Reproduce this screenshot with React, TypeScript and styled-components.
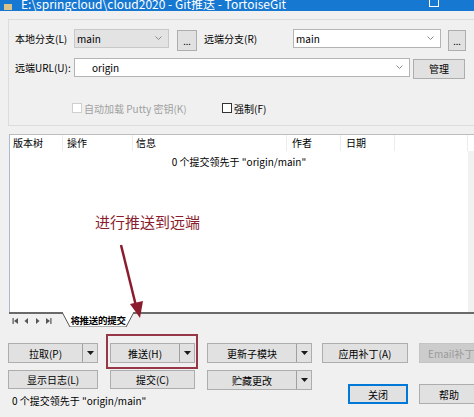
import React from "react";
import styled, { createGlobalStyle } from "styled-components";

const GlobalStyle = createGlobalStyle`
  html, body {
    margin: 0;
    padding: 0;
    background: #f0f0f0;
    overflow: hidden;
  }
  body {
    font-family: "Noto Sans CJK SC", "Noto Sans", sans-serif;
    font-size: 10px;
    color: #000;
  }
`;

const Window = styled.div`
  width: 474px;
  height: 417px;
  overflow: hidden;
  display: flex;
  flex-direction: column;
  background: #f0f0f0;
`;

const TitleBar = styled.div`
  height: 11px;
  background: #1778d2;
  display: flex;
  align-items: flex-end;
  overflow: hidden;
  position: relative;
`;

const TitleIcon = styled.div`
  width: 8px;
  height: 6px;
  margin: 0 9px 1px 4px;
  background: #d8c48a;
`;

const TitleText = styled.div`
  color: #fff;
  font-size: 12px;
  line-height: 12px;
  white-space: nowrap;
  margin-bottom: 1px;
`;

const TitleControl = styled.div`
  position: absolute;
  top: -3px;
  left: ${(p: { left: number }) => p.left}px;
  width: 8px;
  height: 8px;
  border: 1px solid #fff;
`;

const GroupBox = styled.div`
  margin: 8px 0 0 8px;
  height: 99px;
  border: 1px solid #dcdcdc;
  border-right: none;
  padding: 9px 0 0 6px;
  display: flex;
  flex-direction: column;
`;

const FormRow = styled.div<{ mt?: number }>`
  display: flex;
  align-items: flex-start;
  margin-top: ${(p) => p.mt ?? 0}px;
`;

const Label = styled.div<{ w: number; top?: number }>`
  width: ${(p) => p.w}px;
  flex: none;
  line-height: 19px;
  white-space: nowrap;
  color: ${(p) => (p.color ? p.color : "#000")};
`;

const Combo = styled.div<{ w: number; readonly?: boolean; pad?: number }>`
  width: ${(p) => p.w}px;
  height: 19px;
  box-sizing: border-box;
  flex: none;
  display: flex;
  align-items: center;
  justify-content: space-between;
  padding: 0 6px 0 ${(p) => p.pad ?? 2}px;
  background: ${(p) => (p.readonly ? "#e3e3e3" : "#fff")};
  border: 1px solid ${(p) => (p.readonly ? "#c8c8c8" : "#b4b4b4")};
  font-size: 10px;
`;

const Button = styled.div<{ w?: number; h?: number; disabled?: boolean; focused?: boolean }>`
  width: ${(p) => (p.w ? `${p.w}px` : "auto")};
  height: ${(p) => p.h ?? 20}px;
  box-sizing: border-box;
  flex: none;
  display: flex;
  align-items: center;
  justify-content: center;
  background: ${(p) => (p.disabled ? "#cccccc" : "#e1e1e1")};
  border: 1px solid ${(p) => (p.focused ? "#0078d7" : p.disabled ? "#c4c4c4" : "#adadad")};
  box-shadow: ${(p) => (p.focused ? "inset 0 0 0 1px #0078d7" : "none")};
  color: ${(p) => (p.disabled ? "#9a9a9a" : "#000")};
  white-space: nowrap;
  overflow: hidden;
`;

const DotsButton = styled(Button)`
  margin-top: 1px;
  align-items: flex-end;
  padding-bottom: 5px;
  font-size: 9px;
  line-height: 6px;
`;

const CheckItem = styled.div<{ disabled?: boolean }>`
  display: flex;
  align-items: center;
  gap: 2px;
  color: ${(p) => (p.disabled ? "#a0a0a0" : "#000")};
  white-space: nowrap;
`;

const CheckBox = styled.div<{ disabled?: boolean }>`
  width: 10px;
  height: 10px;
  box-sizing: border-box;
  background: #fff;
  border: 1px solid ${(p) => (p.disabled ? "#cfcfcf" : "#333")};
`;

const ListPanel = styled.div`
  position: relative;
  margin: 8px 0 0 9px;
`;

const ListView = styled.div`
  height: 178px;
  box-sizing: border-box;
  background: #fff;
  border-top: 1px solid #bdbdbd;
  border-left: 1px solid #a9bad0;
  display: grid;
  grid-template-columns: 53px 70px 154px 54px 54px 1fr;
  grid-template-rows: 16px 1fr;
`;

const HeaderCell = styled.div<{ pad?: number }>`
  grid-row: 1;
  padding-left: ${(p) => p.pad ?? 4}px;
  line-height: 15px;
  border-right: 1px solid #ececec;
  white-space: nowrap;
`;

const BodyCell = styled.div`
  grid-row: 2;
  border-right: 1px solid #f1f1f1;
`;

const EmptyMessage = styled.div`
  grid-row: 2;
  grid-column: 1 / -1;
  align-self: start;
  text-align: center;
  margin-top: 4px;
  line-height: 14px;
  white-space: nowrap;
`;

const TabStrip = styled.div`
  height: 14px;
  border-top: 2px solid #6a6a6a;
  background: #f0f0f0;
  display: flex;
  align-items: flex-start;
`;

const NavButtons = styled.div`
  display: flex;
  align-items: center;
  gap: 4px;
  height: 14px;
  padding-left: 3px;
  width: 50px;
  flex: none;
`;

const Tab = styled.div`
  position: relative;
  width: 72px;
  height: 15px;
  display: flex;
  align-items: center;
  justify-content: center;
  margin-top: -2px;
  font-weight: bold;
  font-size: 9.5px;
  letter-spacing: -0.3px;
  svg {
    position: absolute;
    inset: 0;
  }
  span {
    position: relative;
  }
`;

const Annotation = styled.div`
  position: absolute;
  left: 86px;
  top: 79px;
  color: #8b1c2e;
  font-size: 15px;
  line-height: 18px;
  white-space: nowrap;
`;

const ArrowLayer = styled.svg`
  position: absolute;
  left: 0;
  top: 0;
  overflow: visible;
  pointer-events: none;
`;

const ButtonArea = styled.div`
  display: flex;
  margin: 15px 0 0 8px;
`;

const LeftButtons = styled.div`
  display: grid;
  grid-template-columns: 90px 85px 105px;
  grid-auto-rows: 20px;
  column-gap: 12px;
  row-gap: 7px;
`;

const StatusText = styled.div`
  grid-column: 1 / -1;
  margin-top: -3px;
  padding-left: 4px;
  line-height: 14px;
  white-space: nowrap;
`;

const RightButtons = styled.div`
  display: grid;
  grid-template-columns: 86px 60px;
  grid-template-rows: 20px 20px;
  column-gap: 11px;
  row-gap: 21px;
  margin-left: 10px;
`;

const CloseButton = styled(Button)`
  justify-self: end;
`;

const Split = styled.div<{ highlight?: boolean }>`
  position: relative;
  display: grid;
  grid-template-columns: 1fr 14px;
  height: 20px;
  box-sizing: border-box;
  background: #e1e1e1;
  border: 1px solid #adadad;
  &::after {
    content: "";
    display: ${(p) => (p.highlight ? "block" : "none")};
    position: absolute;
    left: -5px;
    right: -4px;
    top: -10px;
    bottom: -7px;
    border: 2px solid #963646;
    pointer-events: none;
  }
`;

const SplitMain = styled.div`
  display: flex;
  align-items: center;
  justify-content: center;
  border-right: 1px solid #a0a0a0;
  white-space: nowrap;
`;

const SplitDrop = styled.div`
  display: flex;
  align-items: center;
  justify-content: center;
`;

const Chevron = () => (
  <svg width="7" height="4" viewBox="0 0 7 4">
    <polyline points="0.5,0.5 3.5,3.5 6.5,0.5" fill="none" stroke="#8a8a8a" strokeWidth="1" />
  </svg>
);

const DropArrow = () => (
  <svg width="7" height="4" viewBox="0 0 7 4">
    <polygon points="0,0 7,0 3.5,4" fill="#1a1a1a" />
  </svg>
);

const NavIcon = ({ kind }: { kind: "first" | "prev" | "next" | "last" }) => (
  <svg width="7" height="6" viewBox="0 0 7 6">
    {kind === "first" && (
      <>
        <rect x="0.5" y="0" width="1.2" height="6" fill="#555" />
        <polygon points="6,0 6,6 2,3" fill="#555" />
      </>
    )}
    {kind === "prev" && <polygon points="5,0 5,6 1.5,3" fill="#555" />}
    {kind === "next" && <polygon points="2,0 2,6 5.5,3" fill="#555" />}
    {kind === "last" && (
      <>
        <polygon points="1,0 1,6 5,3" fill="#555" />
        <rect x="5.3" y="0" width="1.2" height="6" fill="#555" />
      </>
    )}
  </svg>
);

const SplitButton = ({ label, highlight }: { label: string; highlight?: boolean }) => (
  <Split highlight={highlight}>
    <SplitMain>{label}</SplitMain>
    <SplitDrop>
      <DropArrow />
    </SplitDrop>
  </Split>
);

export default function App() {
  return (
    <>
      <GlobalStyle />
      <Window>
        <TitleBar>
          <TitleIcon />
          <TitleText>E:\springcloud\cloud2020 - Git推送 - TortoiseGit</TitleText>
          <TitleControl left={429} />
        </TitleBar>

        <GroupBox>
          <FormRow>
            <Label w={59}>本地分支(L)</Label>
            <Combo w={95} readonly>
              <span>main</span>
              <Chevron />
            </Combo>
            <DotsButton w={20} h={21} style={{ marginLeft: 8 }}>
              ...
            </DotsButton>
            <Label w={89} style={{ marginLeft: 7 }}>
              远端分支(R)
            </Label>
            <Combo w={148}>
              <span>main</span>
              <Chevron />
            </Combo>
            <DotsButton w={18} h={21} style={{ marginLeft: 7 }}>
              ...
            </DotsButton>
          </FormRow>

          <FormRow mt={7}>
            <Label w={59}>远端URL(U):</Label>
            <Combo w={336} pad={17}>
              <span>origin</span>
              <Chevron />
            </Combo>
            <Button w={52} style={{ marginLeft: 3, marginTop: 1 }}>
              管理
            </Button>
          </FormRow>

          <FormRow mt={22}>
            <CheckItem disabled style={{ marginLeft: 57, width: 150 }}>
              <CheckBox disabled />
              自动加载 Putty 密钥(K)
            </CheckItem>
            <CheckItem>
              <CheckBox />
              强制(F)
            </CheckItem>
          </FormRow>
        </GroupBox>

        <ListPanel>
          <ListView>
            <HeaderCell pad={3}>版本树</HeaderCell>
            <HeaderCell>操作</HeaderCell>
            <HeaderCell pad={3}>信息</HeaderCell>
            <HeaderCell pad={5}>作者</HeaderCell>
            <HeaderCell pad={5}>日期</HeaderCell>
            <HeaderCell />
            <BodyCell />
            <BodyCell />
            <BodyCell />
            <BodyCell />
            <BodyCell />
            <BodyCell />
            <EmptyMessage>0 个提交领先于 "origin/main"</EmptyMessage>
          </ListView>
          <TabStrip>
            <NavButtons>
              <NavIcon kind="first" />
              <NavIcon kind="prev" />
              <NavIcon kind="next" />
              <NavIcon kind="last" />
            </NavButtons>
            <Tab>
              <svg width="72" height="15" viewBox="0 0 72 15">
                <polygon points="0,0 72,0 64,15 8,15" fill="#fff" />
                <polyline points="0,0 8,15 64,15 72,0" fill="none" stroke="#555" strokeWidth="1" />
              </svg>
              <span>将推送的提交</span>
            </Tab>
          </TabStrip>

          <Annotation>进行推送到远端</Annotation>
          <ArrowLayer width="200" height="200">
            <line x1="112" y1="111" x2="127" y2="172" stroke="#8b1c2e" strokeWidth="2.5" />
            <polygon points="121,170 134,167 131,184" fill="#8b1c2e" />
          </ArrowLayer>
        </ListPanel>

        <ButtonArea>
          <LeftButtons>
            <SplitButton label="拉取(P)" />
            <SplitButton label="推送(H)" highlight />
            <SplitButton label="更新子模块" />
            <Button h={19}>显示日志(L)</Button>
            <Button h={19}>提交(C)</Button>
            <SplitButton label="贮藏更改" />
            <StatusText>0 个提交领先于 "origin/main"</StatusText>
          </LeftButtons>
          <RightButtons>
            <Button>应用补丁(A)</Button>
            <Button disabled style={{ justifyContent: "flex-start", paddingLeft: 8 }}>
              Email补丁
            </Button>
            <CloseButton w={60} focused>
              关闭
            </CloseButton>
            <Button>帮助</Button>
          </RightButtons>
        </ButtonArea>
      </Window>
    </>
  );
}
